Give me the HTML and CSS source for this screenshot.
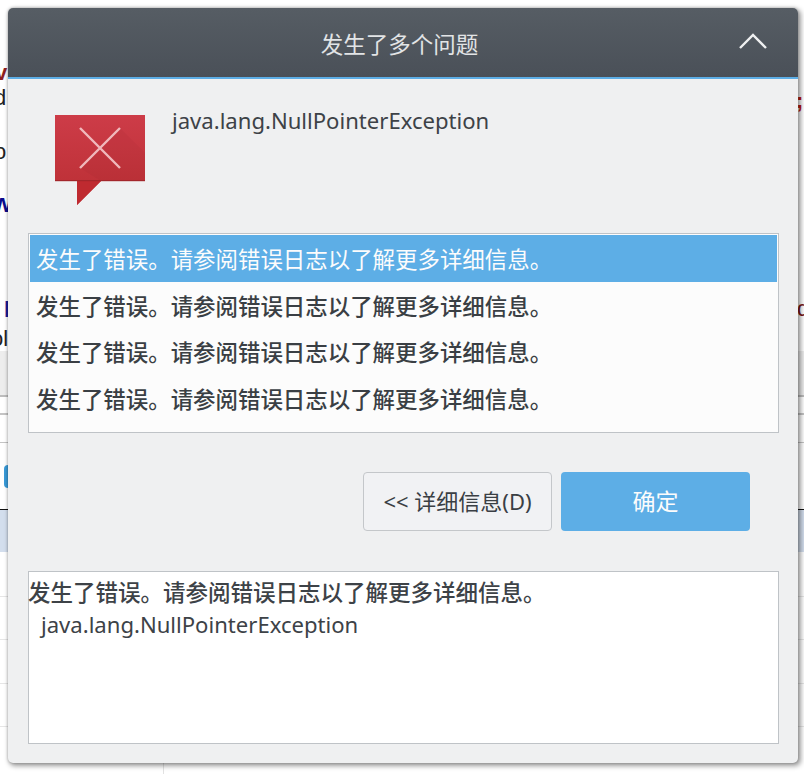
FILE: index.html
```html
<!DOCTYPE html>
<html lang="zh-CN">
<head>
<meta charset="utf-8">
<title>发生了多个问题</title>
<link rel="stylesheet" href="styles.css">
</head>
<body>
<div class="backdrop">
  <div class="band band-tool"></div>
  <div class="rule rule-a"></div>
  <div class="rule rule-b"></div>
  <div class="rule rule-c"></div>
  <div class="rule rule-head"></div>
  <div class="band band-head"></div>
  <div class="rule rule-d"></div>
  <div class="rule rule-e"></div>
  <div class="rule rule-f"></div>
  <div class="rule rule-g"></div>
  <div class="col-line"></div>
  <div class="pill"></div>
  <span class="frag frag-1">v</span>
  <span class="frag frag-2">d</span>
  <span class="frag frag-3">o</span>
  <span class="frag frag-4">w</span>
  <span class="frag frag-5">l</span>
  <span class="frag frag-6">ol</span>
  <span class="frag frag-7">;</span>
  <span class="frag frag-8">d</span>
</div>

<section class="dialog">
  <header class="titlebar">
    <h1 class="title">发生了多个问题</h1>
    <svg class="collapse" viewBox="0 0 30 18" aria-hidden="true">
      <path d="M2 16 L15 3 L28 16" fill="none" stroke="#eff0f1" stroke-width="2.4"/>
    </svg>
  </header>
  <div class="body">
    <div class="summary">
      <svg class="error-icon" viewBox="0 0 90 90" aria-hidden="true">
        <defs>
          <linearGradient id="bubble" x1="0" y1="0" x2="0" y2="1">
            <stop offset="0" stop-color="#cd3c48"/>
            <stop offset="1" stop-color="#ba2e33"/>
          </linearGradient>
        </defs>
        <path d="M0 0 H90 V66 H46 L22 90 V66 H0 Z" fill="url(#bubble)"/>
        <path d="M22 66 H46 L22 90 Z" fill="#bf2a30"/>
        <path d="M65 13 L90 38 V66 H46 L25 53 Z" fill="#8f1f28" opacity=".09"/>
        <rect y="65" width="90" height="1.2" fill="#a3262b"/>
        <path d="M25 13 L65 53 M65 13 L25 53" stroke="#f0b9bc" stroke-width="2.4" fill="none"/>
      </svg>
      <p class="message">java.lang.NullPointerException</p>
    </div>
    <ul class="list">
      <li class="item item-selected">发生了错误。请参阅错误日志以了解更多详细信息。</li>
      <li class="item">发生了错误。请参阅错误日志以了解更多详细信息。</li>
      <li class="item">发生了错误。请参阅错误日志以了解更多详细信息。</li>
      <li class="item">发生了错误。请参阅错误日志以了解更多详细信息。</li>
    </ul>
    <div class="actions">
      <button class="btn btn-details" type="button">&lt;&lt; 详细信息(D)</button>
      <button class="btn btn-ok" type="button">确定</button>
    </div>
    <div class="details">
      <div class="details-head">发生了错误。请参阅错误日志以了解更多详细信息。</div>
      <div class="details-trace">java.lang.NullPointerException</div>
    </div>
  </div>
</section>
</body>
</html>
```
FILE: styles.css
```css
* { box-sizing: border-box; }
html, body {
  margin: 0;
  width: 804px;
  height: 774px;
  overflow: hidden;
  background: #fff;
  font-family: "Noto Sans", "Noto Sans CJK SC", sans-serif;
}

/* Window behind the dialog */
.backdrop { position: absolute; inset: 0; overflow: hidden; }
.band, .rule, .col-line, .pill, .frag { position: absolute; }
.band-tool { left: 0; right: 0; top: 351px; height: 44px; background: #ededed; }
.band-head { left: 0; right: 0; top: 510px; height: 42px; background: #d3deed; }
.rule { left: 0; right: 0; height: 1px; background: #d8d8d8; }
.rule-a { top: 395px; height: 2px; background: #bdbdbd; }
.rule-b { top: 413px; height: 2px; background: #c4c4c4; }
.rule-c { top: 442px; background: #c4c4c4; }
.rule-head { top: 509px; height: 1px; background: #111; }
.rule-d { top: 596px; background: #e6e6e6; }
.rule-e { top: 639px; background: #e6e6e6; }
.rule-f { top: 683px; background: #e6e6e6; }
.rule-g { top: 726px; background: #e6e6e6; }
.col-line { left: 163px; top: 700px; bottom: 0; width: 1px; background: #e2e2e2; }
.pill { left: 4px; top: 465px; width: 14px; height: 23px; border-radius: 4px; background: #3a9bd8; }
.frag { font: 700 22px/26px "Liberation Sans", sans-serif; color: #222; }
.frag-1 { left: -5px; top: 60px; color: #8f1f1f; }
.frag-2 { left: -6px; top: 85px; font-weight: 400; }
.frag-3 { left: -6px; top: 139px; font-weight: 400; }
.frag-4 { left: -8px; top: 190px; font-size: 26px; color: #0b0b8c; }
.frag-5 { left: 4px; top: 297px; color: #1c1c9a; }
.frag-6 { left: -9px; top: 326px; font-weight: 400; }
.frag-7 { left: 796px; top: 88px; color: #c01818; }
.frag-8 { left: 797px; top: 296px; color: #7a1616; font-weight: 400; }

/* Dialog */
.dialog {
  position: absolute;
  left: 8px;
  top: 8px;
  width: 790px;
  height: 755px;
  display: flex;
  flex-direction: column;
  background: #eff0f1;
  border-radius: 5px;
  box-shadow: 2px 2px 5px 1px rgba(0, 0, 0, .38), 0 0 3px rgba(0, 0, 0, .25);
}
.titlebar {
  position: relative;
  flex: none;
  height: 71px;
  display: flex;
  align-items: center;
  justify-content: center;
  background: linear-gradient(#565d64, #4a5058);
  border-bottom: 2px solid #5daee6;
  border-radius: 5px 5px 0 0;
}
.title {
  margin: 1px 0 0 -7px;
  font-size: 22.5px;
  font-weight: 400;
  color: #e2e4e6;
  font-family: "Noto Sans CJK SC", sans-serif;
}
.collapse { position: absolute; left: 730px; top: 24px; width: 30px; height: 18px; }
.body { flex: 1; display: flex; flex-direction: column; padding: 0 19px 19px 20px; }
.summary { flex: none; height: 154px; display: flex; padding: 36px 0 0 27px; }
.error-icon { flex: none; width: 90px; height: 90px; }
.message {
  margin: -10px 0 0 27px;
  font-size: 22.1px;
  line-height: 30px;
  color: #3d4247;
}
.list {
  flex: none;
  height: 200px;
  margin: 0;
  padding: 1px;
  list-style: none;
  background: #fcfcfc;
  border: 1px solid #bfc3c7;
  font-family: "Noto Sans CJK SC", sans-serif;
}
.item {
  height: 46.67px;
  padding-left: 6px;
  font-size: 22.45px;
  font-weight: 500;
  line-height: 46.67px;
  color: #3a3f44;
  white-space: nowrap;
}
.item-selected { background: #5daee6; color: #fcfcfc; font-weight: 400; }
.actions { flex: none; display: flex; justify-content: flex-end; align-items: center; gap: 9px; height: 137px; padding: 0 29px 0 0; }
.btn {
  height: 59px;
  width: 189px;
  padding: 0 0 4px;
  font-family: "Noto Sans", "Noto Sans CJK SC", sans-serif;
  font-size: 22px;
  border-radius: 4px;
}
.btn-details { background: #f1f2f4; color: #3a3f44; border: 1px solid #c4c7ca; }
.btn-ok { background: #5daee6; color: #fcfcfc; border: 0; font-size: 23px; }
.details {
  flex: none;
  height: 173px;
  margin-top: 1px;
  background: #fff;
  border: 1px solid #bfc3c7;
  color: #3d4247;
}
.details-head {
  padding: 2px 0 0 0;
  margin-left: -1px;
  height: 37px;
  font-family: "Noto Sans CJK SC", sans-serif;
  font-size: 22.5px;
  font-weight: 500;
  line-height: 34px;
  white-space: nowrap;
}
.details-trace { padding-left: 12px; font-size: 22.1px; line-height: 30px; }
```
